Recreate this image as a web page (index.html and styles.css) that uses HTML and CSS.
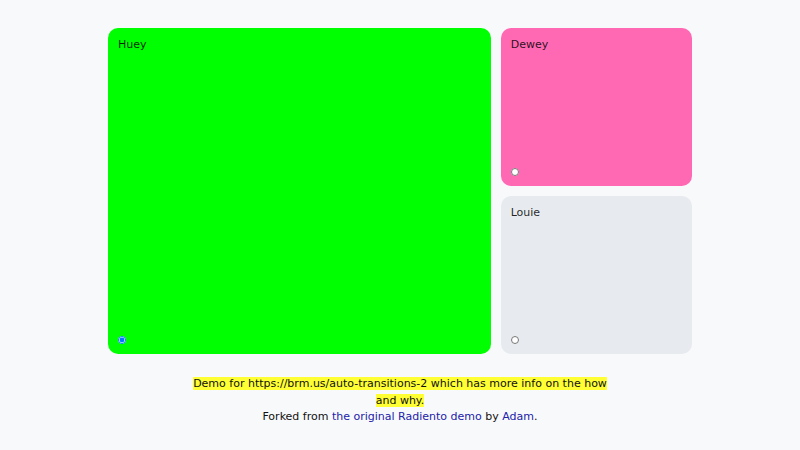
FILE: index.html
```html
<!DOCTYPE html>
<html>
<head>
<meta charset="utf-8">
<link rel="stylesheet" href="styles.css">
</head>
<body>
<main class="page">
  <div class="grid">
    <label class="card card-huey">
      <span class="name">Huey</span>
      <input type="radio" name="duck" checked>
    </label>
    <label class="card card-dewey">
      <span class="name">Dewey</span>
      <input type="radio" name="duck">
    </label>
    <label class="card card-louie">
      <span class="name">Louie</span>
      <input type="radio" name="duck">
    </label>
  </div>
  <div class="info">
    <p class="note"><mark>Demo for https://brm.us/auto-transitions-2 which has more info on the how and why.</mark></p>
    <p class="credit">Forked from <a href="#">the original Radiento demo</a> by <a href="#">Adam</a>.</p>
  </div>
</main>
</body>
</html>
```
FILE: styles.css
```css
html, body {
  margin: 0;
  padding: 0;
  background: #f8f9fb;
  font-family: "DejaVu Sans", sans-serif;
  color: #111;
}
.page {
  padding-top: 28px;
  display: flex;
  flex-direction: column;
  align-items: center;
}
.grid {
  width: 584px;
  height: 326px;
  display: grid;
  grid-template-columns: 2fr 1fr;
  grid-template-rows: 1fr 1fr;
  gap: 10px;
}
.card {
  border-radius: 10px;
  padding: 10px 10px 10px 10px;
  display: flex;
  flex-direction: column;
  justify-content: space-between;
  align-items: flex-start;
  box-sizing: border-box;
}
.card-huey {
  grid-row: 1 / 3;
  background: #00ff00;
}
.card-dewey {
  background: #ff69b4;
}
.card-louie {
  background: #e7eaee;
}
.name {
  font-size: 11px;
  color: rgba(0, 0, 0, 0.85);
}
.card input {
  width: 8px;
  height: 8px;
  margin: 0 0 0 0;
}
.info {
  margin-top: 22px;
  width: 426px;
  text-align: center;
  font-size: 11px;
  line-height: 16.5px;
}
.info p {
  margin: 0;
}
mark {
  background: #ffff33;
  color: #111;
}
a {
  color: #2222aa;
  text-decoration: none;
}
```
